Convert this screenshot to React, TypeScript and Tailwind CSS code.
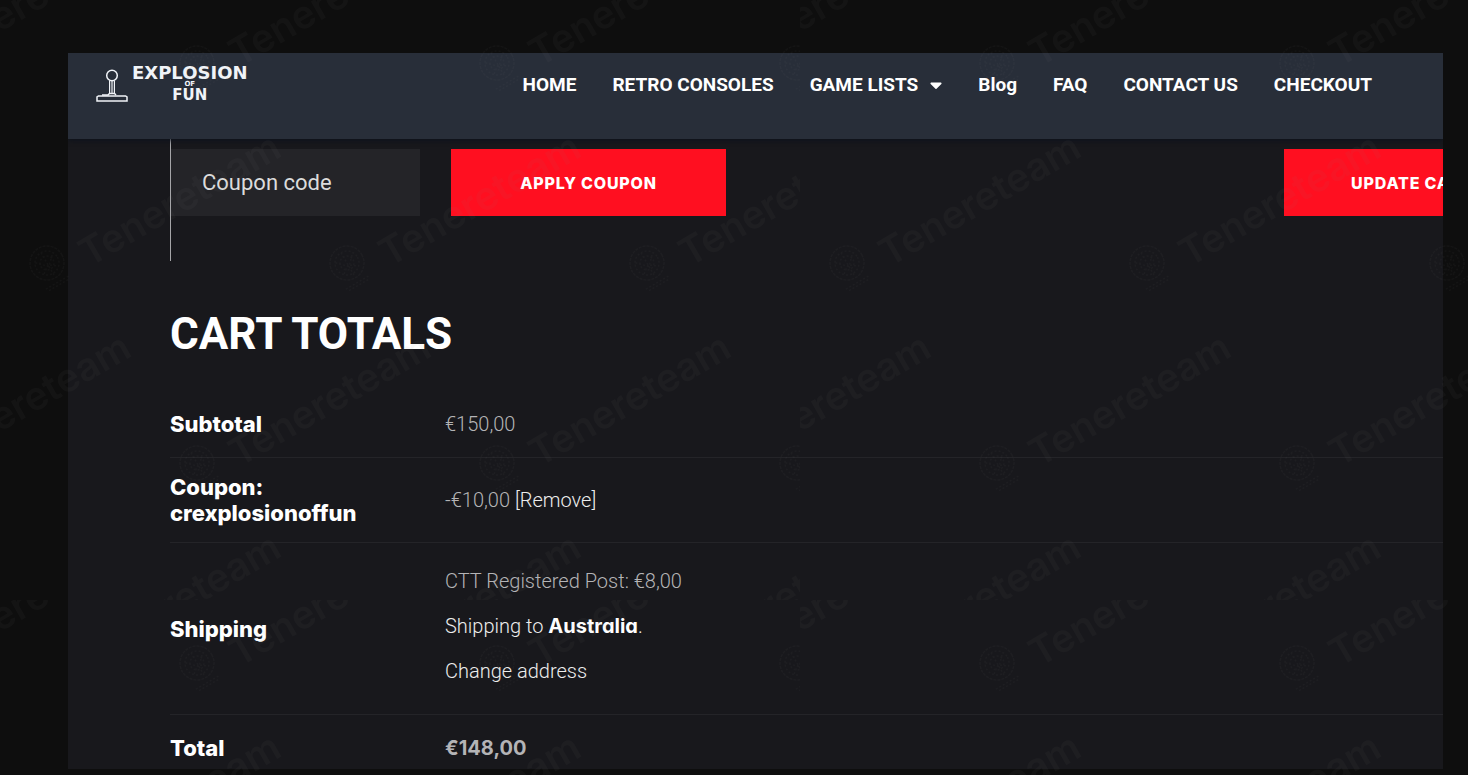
import { FaCaretDown } from 'react-icons/fa'

const navItems = [
  { label: 'HOME' },
  { label: 'RETRO CONSOLES' },
  { label: 'GAME LISTS', hasMenu: true },
  { label: 'Blog' },
  { label: 'FAQ' },
  { label: 'CONTACT US' },
  { label: 'CHECKOUT' },
]

// Staggered rows inside one 800x600 tile
const marks = [
  [-103, 63], [197, 63], [497, 63], [797, 63],
  [47, 263], [347, 263], [647, 263],
  [-103, 463], [197, 463], [497, 463], [797, 463],
  [47, 663], [347, 663], [647, 663],
]

function Watermark() {
  return (
    <svg aria-hidden="true" className="pointer-events-none absolute inset-0 h-full w-full text-[#888888] opacity-[0.05]">
      <defs>
        <pattern id="watermark" width="800" height="600" patternUnits="userSpaceOnUse">
          {marks.map(([x, y]) => (
            <g key={`${x}-${y}`} transform={`translate(${x} ${y}) rotate(-30)`} fill="currentColor">
              <circle r="17" fill="none" stroke="currentColor" strokeWidth="1.5" strokeDasharray="3 1" />
              <g fill="none" stroke="currentColor" strokeWidth="1.5" strokeDasharray="2 2">
                <circle r="12" />
                <circle r="7" />
                <path d="M0 -12V14M-10 -6 0 4 10 -6M-8 8 0 2 8 8" />
                <path d="M-14 22H14M-12 25H12" />
              </g>
              <text x="34" y="25" className="font-['Inter',sans-serif] text-[39px] font-semibold">
                Tenereteam
              </text>
            </g>
          ))}
        </pattern>
      </defs>
      <rect width="100%" height="100%" fill="url(#watermark)" />
    </svg>
  )
}

function Logo() {
  return (
    <a href="#" className="flex items-end gap-1 text-[#f1f4f8]">
      <svg width="32" height="33" viewBox="0 0 32 33" fill="none" stroke="currentColor" strokeWidth="1.5" aria-hidden="true">
        <circle cx="16" cy="6.5" r="5.3" />
        <path d="M13.6 11.5V25M18.4 11.5V25M16 12V25" strokeWidth="1.2" />
        <path d="M1 32V28L2.5 27H29.5L31 28V32Z" />
        <path d="M6 26H12L13.5 24.5H18.5L20 26" />
      </svg>
      <span className="flex flex-col items-center font-['DejaVu_Sans',sans-serif] font-bold">
        <span className="text-[18px] leading-[15px]">EXPLOSION</span>
        <span className="text-[7px] leading-[9px]">OF</span>
        <span className="text-[15px] leading-[13px]">FUN</span>
      </span>
    </a>
  )
}

function Header() {
  return (
    <header className="relative flex h-[86px] items-start justify-between bg-[#282e39] pt-3 pr-[71px] pl-7 shadow-[0_1px_5px_#0b111c]">
      <Logo />
      <nav className="flex gap-9 pt-2 font-['Roboto',sans-serif] text-[19px] leading-6 font-bold text-white">
        {navItems.map((item) => (
          <a key={item.label} href="#" className="flex items-center gap-3 whitespace-nowrap">
            {item.label}
            {item.hasMenu && <FaCaretDown className="h-5 w-3" />}
          </a>
        ))}
      </nav>
    </header>
  )
}

function CouponForm() {
  const button =
    "h-[67px] shrink-0 bg-[#ff0f20] font-['Inter',sans-serif] text-[16px] font-extrabold tracking-wider text-white"

  return (
    <form className="flex h-[122px] items-start border-l border-[#a5a5a8] pt-[10px]">
      <input
        type="text"
        aria-label="Coupon code"
        placeholder="Coupon code"
        className="mr-[31px] h-[67px] w-[249px] bg-[#242428] px-[31px] text-[22px] text-white placeholder:text-[#dcdcdc]"
      />
      <button type="button" className={`${button} w-[275px]`}>APPLY COUPON</button>
      <button type="button" className={`${button} ml-auto w-[256px]`}>UPDATE CART</button>
    </form>
  )
}

function CartTotals() {
  const label =
    "w-[275px] text-left font-['Inter',sans-serif] text-[22px] leading-[26px] font-extrabold text-white [font-variant-ligatures:none]"

  return (
    <section className="pt-[47px]">
      <h2 className="font-['Roboto',sans-serif] text-[44px] leading-[52px] font-bold text-white">CART TOTALS</h2>
      <table className="mt-[51px] w-full border-collapse text-[20px] leading-[26px] font-light text-[#b4b4b6]">
        <tbody>
          <tr className="border-b border-[#242428]">
            <th scope="row" className={`${label} pb-5`}>Subtotal</th>
            <td className="pb-5">€150,00</td>
          </tr>
          <tr className="border-b border-[#242428]">
            <th scope="row" className={`${label} py-4`}>
              Coupon:
              <br />
              crexplosionoffun
            </th>
            <td className="py-4">
              -€10,00 <a href="#" className="text-[#ededed]">[Remove]</a>
            </td>
          </tr>
          <tr className="border-b border-[#242428]">
            <th scope="row" className={label}>Shipping</th>
            <td className="pt-[25px] pb-[30px]">
              <div className="flex flex-col gap-[19px]">
                <p>CTT Registered Post: €8,00</p>
                <p className="text-[#ededed]">
                  Shipping to{' '}
                  <strong className="font-['Inter',sans-serif] font-bold text-white [font-feature-settings:'cv11']">
                    Australia
                  </strong>
                  .
                </p>
                <a href="#" className="text-[#ededed]">Change address</a>
              </div>
            </td>
          </tr>
          <tr>
            <th scope="row" className={`${label} pt-5 pb-2`}>Total</th>
            <td className="pt-5 pb-2 font-['Inter',sans-serif] font-bold">€148,00</td>
          </tr>
        </tbody>
      </table>
    </section>
  )
}

export default function App() {
  return (
    <div className="relative min-h-screen overflow-hidden bg-[#0e0e0e] pt-[53px] pr-[25px] pb-[5px] pl-[68px] font-['Roboto',sans-serif]">
      <div className="overflow-hidden bg-[#18181c]">
        <Header />
        {/* Cart runs past the right edge of the window */}
        <main className="-mr-[97px] pl-[102px]">
          <CouponForm />
          <CartTotals />
        </main>
      </div>
      <Watermark />
    </div>
  )
}
